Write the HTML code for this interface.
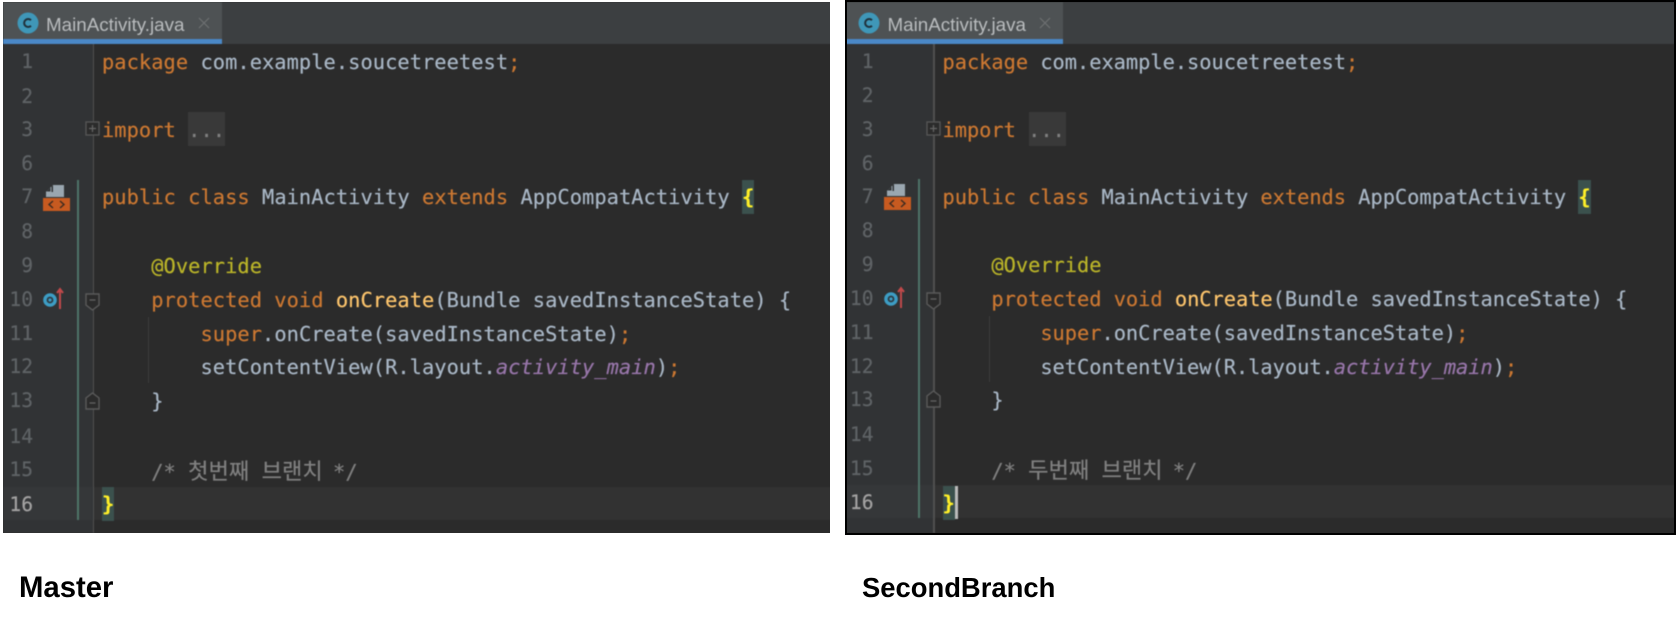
<!DOCTYPE html>
<html lang="ko">
<head>
<meta charset="utf-8">
<title>MainActivity.java</title>
<style>
html,body{margin:0;padding:0;background:#fff;width:1676px;height:622px;overflow:hidden}
.panel{position:absolute;top:2px;width:827px;height:531px;overflow:hidden;background:#2b2b2b}
.inner{position:absolute;left:0;top:0;width:840px;height:531px;filter:blur(.45px)}
.abs{position:absolute}
.bar{left:0;top:0;width:840px;height:42px;background:#3c3f41}
.tab{left:0;top:0;width:219px;height:37px;background:#4e5254}
.blue{left:0;top:37px;width:219px;height:5px;background:#4a88c7}
.tabt{left:43px;top:11px;font:18.8px/24px "Liberation Sans",sans-serif;color:#b9bcbe;white-space:nowrap}
.gutter{left:0;top:42px;width:90px;height:489px;background:#313335}
.sep{left:89.5px;top:42px;width:1.5px;height:489px;background:#505050}
.green{left:74px;top:178px;width:2px;height:340px;background:#4e7468}
.cur{left:91px;height:33px;width:740px;background:#323232}
.curg{left:0;height:33px;width:89px;background:#353739}
.row{position:absolute;left:99px;height:34px;line-height:34px;white-space:pre;font-family:"DejaVu Sans Mono","Noto Sans CJK KR",monospace;font-size:20.38px;letter-spacing:.05px;color:#a9b7c6;-webkit-text-stroke:.2px currentColor}
.r .row{letter-spacing:-.03px}
.n{position:absolute;left:0;width:30px;height:34px;line-height:34px;text-align:right;font-family:"DejaVu Sans Mono",monospace;font-size:19.6px;color:#5f6366;-webkit-text-stroke:.2px currentColor}
.k{color:#cc7832}.m{color:#ffc66d}.a{color:#bbb529}.c{color:#808080}.f{color:#9876aa;font-style:italic}.d{color:#808080}
.h{font-family:"Noto Sans CJK KR",sans-serif;font-size:22.15px;letter-spacing:0}
.e{margin-left:-2px}
.b{color:#ffef28;font-weight:bold}
.bh{display:inline-block;vertical-align:top;background:#3b514d;height:34px;line-height:34px}
.foldph{left:185px;top:110px;width:37px;height:34px;background:#393939}
.guide{left:145px;top:315px;width:1px;height:66px;background:#3d3d3d}
.lab{position:absolute;font-family:"Liberation Sans",sans-serif;font-weight:bold;color:#000;white-space:nowrap;line-height:34px}
.bd{position:absolute;left:845px;top:0;width:831px;height:535px;background:#000}
</style>
</head>
<body>

<!-- LEFT PANEL -->
<div class="panel" style="left:3px">
<div class="inner">
  <div class="abs bar"></div>
  <div class="abs tab"></div>
  <div class="abs blue"></div>
  <svg class="abs" style="left:13px;top:10px" width="24" height="24" viewBox="0 0 24 24"><circle cx="12" cy="11" r="10.5" fill="#3f97b8"/><path d="M15 8.2a4 4 0 1 0 0 5.6" fill="none" stroke="#20303a" stroke-width="2"/></svg>
  <div class="abs tabt">MainActivity.java</div>
  <svg class="abs" style="left:195px;top:15px" width="12" height="12" viewBox="0 0 12 12"><path d="M1 1L11 11M11 1L1 11" stroke="#6d7072" stroke-width="1.2"/></svg>

  <div class="abs gutter"></div>
  <div class="abs cur" style="top:485px"></div>
  <div class="abs curg" style="top:485px"></div>
  <div class="abs sep"></div>
  <div class="abs green"></div>
  <div class="abs foldph"></div>
  <div class="abs guide"></div>

  <svg class="abs" style="left:40px;top:180px" width="28" height="30" viewBox="0 0 28 30"><path d="M10 3H21V15H3V10Z" fill="#9aa7b0"/><path d="M10 3V10H3Z" fill="#313335"/><path d="M8 5V10H3" fill="none" stroke="#9aa7b0" stroke-width="1"/><rect x="0" y="16" width="27" height="13" fill="#c75a20"/><path d="M10 19L6 22.5L10 26M17 19L21 22.5L17 26" fill="none" stroke="#3a2a20" stroke-width="1.4"/></svg>
  <svg class="abs" style="left:40px;top:284px" width="24" height="26" viewBox="0 0 24 26"><circle cx="7" cy="14" r="6.8" fill="#3d9dc4"/><circle cx="7" cy="14" r="3.4" fill="#2d3a42"/><circle cx="7" cy="14" r="1.6" fill="#3d9dc4"/><path d="M17 23V4M14 7L17 3L20 7" fill="none" stroke="#c0494a" stroke-width="2"/></svg>

  <svg class="abs" style="left:82px;top:119px" width="16" height="16" viewBox="0 0 16 16"><rect x="1" y="1" width="13" height="13" fill="#2b2b2b" stroke="#555" stroke-width="1.4"/><path d="M4 7.5H11M7.5 4V11" stroke="#666" stroke-width="1.2"/></svg>
  <svg class="abs" style="left:82px;top:290px" width="16" height="20" viewBox="0 0 16 20"><path d="M1 2H14V13L7.5 18L1 13Z" fill="#2b2b2b" stroke="#5a5a5a" stroke-width="1.4"/><path d="M4.5 8H10.5" stroke="#666" stroke-width="1.2"/></svg>
  <svg class="abs" style="left:82px;top:389px" width="16" height="20" viewBox="0 0 16 20"><path d="M1 18H14V7L7.5 2L1 7Z" fill="#2b2b2b" stroke="#5a5a5a" stroke-width="1.4"/><path d="M4.5 12H10.5" stroke="#666" stroke-width="1.2"/></svg>

  <div class="n" style="top:43px">1</div>
  <div class="n" style="top:78px">2</div>
  <div class="n" style="top:111px">3</div>
  <div class="n" style="top:145px">6</div>
  <div class="n" style="top:178px">7</div>
  <div class="n" style="top:213px">8</div>
  <div class="n" style="top:247px">9</div>
  <div class="n" style="top:281px">10</div>
  <div class="n" style="top:315px">11</div>
  <div class="n" style="top:348px">12</div>
  <div class="n" style="top:382px">13</div>
  <div class="n" style="top:418px">14</div>
  <div class="n" style="top:451px">15</div>
  <div class="n" style="top:486px;color:#a4a3a3">16</div>

  <div class="row" style="top:43px"><span class="k">package</span> com.example.soucetreetest<span class="k">;</span></div>
  <div class="row" style="top:111px"><span class="k">import</span> <span class="d">...</span></div>
  <div class="row" style="top:178px"><span class="k">public class</span> MainActivity <span class="k">extends</span> AppCompatActivity <span class="b bh">{</span></div>
  <div class="row" style="top:247px">    <span class="a">@Override</span></div>
  <div class="row" style="top:281px">    <span class="k">protected void</span> <span class="m">onCreate</span>(Bundle savedInstanceState) {</div>
  <div class="row" style="top:315px">        <span class="k">super</span>.onCreate(savedInstanceState)<span class="k">;</span></div>
  <div class="row" style="top:348px">        setContentView(R.layout.<span class="f">activity_main</span>)<span class="k">;</span></div>
  <div class="row" style="top:382px">    }</div>
  <div class="row" style="top:451px">    <span class="c">/* <span class="h">첫번째</span> <span class="h">브랜치</span> <span class="e">*/</span></span></div>
  <div class="row" style="top:485px"><span class="b bh">}</span></div>
</div>
</div>

<!-- RIGHT PANEL -->
<div class="bd"></div>
<div class="panel" style="left:847px">
<div class="inner r" style="left:-3.5px">
  <div class="abs bar"></div>
  <div class="abs tab"></div>
  <div class="abs blue"></div>
  <svg class="abs" style="left:13px;top:10px" width="24" height="24" viewBox="0 0 24 24"><circle cx="12" cy="11" r="10.5" fill="#3f97b8"/><path d="M15 8.2a4 4 0 1 0 0 5.6" fill="none" stroke="#20303a" stroke-width="2"/></svg>
  <div class="abs tabt" style="left:44px">MainActivity.java</div>
  <svg class="abs" style="left:195px;top:15px" width="12" height="12" viewBox="0 0 12 12"><path d="M1 1L11 11M11 1L1 11" stroke="#6d7072" stroke-width="1.2"/></svg>

  <div class="abs gutter"></div>
  <div class="abs cur" style="top:483px;width:840px"></div>
  <div class="abs curg" style="top:483px"></div>
  <div class="abs sep"></div>
  <div class="abs green" style="top:177px;height:339px"></div>
  <div class="abs foldph"></div>
  <div class="abs guide" style="top:314px"></div>

  <svg class="abs" style="left:40px;top:179px" width="28" height="30" viewBox="0 0 28 30"><path d="M10 3H21V15H3V10Z" fill="#9aa7b0"/><path d="M10 3V10H3Z" fill="#313335"/><path d="M8 5V10H3" fill="none" stroke="#9aa7b0" stroke-width="1"/><rect x="0" y="16" width="27" height="13" fill="#c75a20"/><path d="M10 19L6 22.5L10 26M17 19L21 22.5L17 26" fill="none" stroke="#3a2a20" stroke-width="1.4"/></svg>
  <svg class="abs" style="left:40px;top:283px" width="24" height="26" viewBox="0 0 24 26"><circle cx="7" cy="14" r="6.8" fill="#3d9dc4"/><circle cx="7" cy="14" r="3.4" fill="#2d3a42"/><circle cx="7" cy="14" r="1.6" fill="#3d9dc4"/><path d="M17 23V4M14 7L17 3L20 7" fill="none" stroke="#c0494a" stroke-width="2"/></svg>

  <svg class="abs" style="left:82px;top:119px" width="16" height="16" viewBox="0 0 16 16"><rect x="1" y="1" width="13" height="13" fill="#2b2b2b" stroke="#555" stroke-width="1.4"/><path d="M4 7.5H11M7.5 4V11" stroke="#666" stroke-width="1.2"/></svg>
  <svg class="abs" style="left:82px;top:289px" width="16" height="20" viewBox="0 0 16 20"><path d="M1 2H14V13L7.5 18L1 13Z" fill="#2b2b2b" stroke="#5a5a5a" stroke-width="1.4"/><path d="M4.5 8H10.5" stroke="#666" stroke-width="1.2"/></svg>
  <svg class="abs" style="left:82px;top:387px" width="16" height="20" viewBox="0 0 16 20"><path d="M1 18H14V7L7.5 2L1 7Z" fill="#2b2b2b" stroke="#5a5a5a" stroke-width="1.4"/><path d="M4.5 12H10.5" stroke="#666" stroke-width="1.2"/></svg>

  <div class="n" style="top:43px">1</div>
  <div class="n" style="top:77px">2</div>
  <div class="n" style="top:111px">3</div>
  <div class="n" style="top:145px">6</div>
  <div class="n" style="top:178px">7</div>
  <div class="n" style="top:212px">8</div>
  <div class="n" style="top:246px">9</div>
  <div class="n" style="top:280px">10</div>
  <div class="n" style="top:314px">11</div>
  <div class="n" style="top:348px">12</div>
  <div class="n" style="top:381px">13</div>
  <div class="n" style="top:416px">14</div>
  <div class="n" style="top:450px">15</div>
  <div class="n" style="top:484px;color:#a4a3a3">16</div>

  <div class="row" style="top:43px"><span class="k">package</span> com.example.soucetreetest<span class="k">;</span></div>
  <div class="row" style="top:111px"><span class="k">import</span> <span class="d">...</span></div>
  <div class="row" style="top:178px"><span class="k">public class</span> MainActivity <span class="k">extends</span> AppCompatActivity <span class="b bh">{</span></div>
  <div class="row" style="top:246px">    <span class="a">@Override</span></div>
  <div class="row" style="top:280px">    <span class="k">protected void</span> <span class="m">onCreate</span>(Bundle savedInstanceState) {</div>
  <div class="row" style="top:314px">        <span class="k">super</span>.onCreate(savedInstanceState)<span class="k">;</span></div>
  <div class="row" style="top:348px">        setContentView(R.layout.<span class="f">activity_main</span>)<span class="k">;</span></div>
  <div class="row" style="top:381px">    }</div>
  <div class="row" style="top:450px">    <span class="c">/* <span class="h">두번째</span> <span class="h">브랜치</span> <span class="e">*/</span></span></div>
  <div class="row" style="top:484px"><span class="b bh">}</span></div>
  <div class="abs" style="left:111px;top:484px;width:3px;height:33px;background:#bbb"></div>
</div>
</div>

<div class="lab" style="left:19px;top:571px;font-size:29.3px">Master</div>
<div class="lab" style="left:862px;top:571px;font-size:27.4px">SecondBranch</div>

</body>
</html>
